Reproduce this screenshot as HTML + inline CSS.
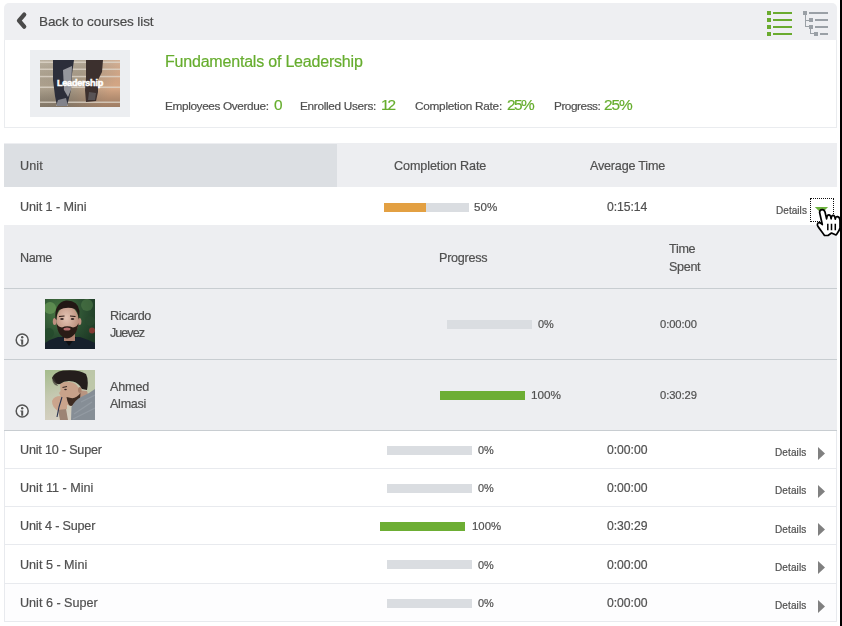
<!DOCTYPE html>
<html><head><meta charset="utf-8">
<style>
html,body{margin:0;padding:0;background:#fff;width:842px;height:626px;overflow:hidden;position:relative;font-family:"Liberation Sans",sans-serif;}
.a{position:absolute;}
.t{position:absolute;white-space:nowrap;line-height:1;will-change:transform;-webkit-text-stroke:0.2px currentColor;font-family:"Liberation Sans",sans-serif;}
.bar{position:absolute;height:9px;background:#dadde1;}
.fill{position:absolute;left:0;top:0;height:9px;}
.div{position:absolute;left:4px;width:833px;height:1px;background:#e8eaee;}
</style></head><body>
<!-- right black strip -->
<div class="a" style="left:840px;top:0;width:2px;height:626px;background:#000"></div>

<!-- header bar -->
<div class="a" style="left:4px;top:3px;width:833px;height:37px;background:#eeeff2;border-radius:5px 5px 0 0"></div>
<svg class="a" style="left:0;top:0" width="40" height="40"><path d="M24.2 14.6 L19.0 20.6 L24.2 26.6" fill="none" stroke="#4a4a4a" stroke-width="4.3" stroke-linecap="round" stroke-linejoin="round"/></svg>
<!-- list icons -->
<svg class="a" style="left:760px;top:5px" width="80" height="35">
 <g fill="#6aab2f">
  <rect x="7" y="6" width="4" height="4"/><rect x="13" y="7" width="19" height="2"/>
  <rect x="7" y="13" width="4" height="4"/><rect x="13" y="14" width="19" height="2"/>
  <rect x="7" y="20" width="4" height="4"/><rect x="13" y="21" width="19" height="2"/>
  <rect x="7" y="27" width="4" height="4"/><rect x="13" y="28" width="19" height="2"/>
 </g>
 <g fill="#9aa0a6">
  <rect x="43" y="6" width="4" height="4"/><rect x="49" y="7" width="19" height="2"/>
  <rect x="45" y="10" width="1" height="12"/><rect x="45" y="15" width="4" height="1"/><rect x="45" y="21" width="4" height="1"/>
  <rect x="49" y="13" width="4" height="4"/><rect x="55" y="14" width="13" height="2"/>
  <rect x="49" y="20" width="4" height="4"/><rect x="55" y="21" width="13" height="2"/>
  <rect x="50" y="24" width="1" height="5"/><rect x="50" y="28" width="4" height="1"/>
  <rect x="54" y="27" width="4" height="4"/><rect x="60" y="28" width="8" height="2"/>
 </g>
</svg>

<!-- course info box -->
<div class="a" style="left:4px;top:40px;width:831px;height:87px;border:1px solid #eaecef;border-top:none"></div>
<div class="a" style="left:30px;top:50px;width:100px;height:67px;background:#eceef1"></div>
<svg class="a" style="left:40px;top:60px" width="80" height="47">
 <defs>
  <linearGradient id="st" x1="0" y1="0" x2="1" y2="0.3"><stop offset="0" stop-color="#b0a592"/><stop offset="0.55" stop-color="#a89a86"/><stop offset="1" stop-color="#d6a886"/></linearGradient>
  <linearGradient id="sv" x1="0" y1="0" x2="0" y2="1"><stop offset="0" stop-color="#fff" stop-opacity="0.15"/><stop offset="0.6" stop-color="#000" stop-opacity="0"/><stop offset="1" stop-color="#3a3028" stop-opacity="0.35"/></linearGradient>
 </defs>
 <rect width="80" height="47" fill="url(#st)"/>
 <rect width="80" height="47" fill="url(#sv)"/>
 <g fill="#e0d8cc" opacity="0.75">
  <rect y="1.5" width="80" height="1.5"/><rect y="8.5" width="80" height="1.5"/><rect y="15.8" width="80" height="1.5"/><rect y="26.5" width="80" height="1.5"/><rect y="41.5" width="80" height="1.5"/>
 </g>
 <path d="M13 0 L34 0 L32 14 L31 30 L29 38 L27 46 L17 46 L15 36 L13 20 Z" fill="#2c2e3a"/>
 <path d="M23 10 L32 6 L31 30 L28 37 L24 30 Z" fill="#a8a8ae" opacity="0.85"/>
 <path d="M18 40 L26 38 L28 46 L16 46 Z" fill="#d8d8dc" opacity="0.5"/>
 <path d="M46 0 L63 0 L62 12 L58 20 L58 32 L56 41 L46 42 L45 30 L46 18 Z" fill="#3c302e"/>
 <path d="M49 32 L56 33 L55 40 L48 40 Z" fill="#6a6a70" opacity="0.6"/>
 <text x="40" y="25.7" font-family="Liberation Sans" font-weight="bold" font-size="9.2" letter-spacing="-0.3" fill="#fff" stroke="#fff" stroke-width="0.5" text-anchor="middle">Leadership</text>
</svg>

<!-- table header -->
<div class="a" style="left:4px;top:144px;width:333px;height:43px;background:#dcdfe3"></div>
<div class="a" style="left:4px;top:143px;width:833px;height:1px;background:#edeef1"></div><div class="a" style="left:337px;top:144px;width:500px;height:43px;background:#edeef1"></div>
<!-- unit 1 row -->
<div class="a" style="left:4px;top:187px;width:833px;height:38px;background:#fff"></div>
<div class="bar" style="left:384px;top:203px;width:85px"><div class="fill" style="width:42px;background:#e3a042"></div></div>
<!-- details dotted box -->
<div class="a" style="left:810px;top:198px;width:22px;height:22px;border:1px dotted #111"></div>
<svg class="a" style="left:812px;top:204px" width="20" height="12"><path d="M2.8 3 L16.1 3 L9.5 9.5 Z" fill="#6db33f"/></svg>

<!-- sub table -->
<div class="a" style="left:4px;top:225px;width:833px;height:206px;background:#edeef1"></div>
<div class="a" style="left:4px;top:288px;width:833px;height:1px;background:#c8cdd1"></div>
<div class="a" style="left:4px;top:359px;width:833px;height:1px;background:#c8cdd1"></div>
<div class="a" style="left:4px;top:430px;width:833px;height:1px;background:#c8cdd1"></div>

<!-- info icons -->
<svg class="a" style="left:14px;top:332px" width="16" height="16"><circle cx="8.2" cy="8" r="6" fill="#f5f6f8" stroke="#555" stroke-width="1.5"/><circle cx="8.2" cy="5.3" r="1.2" fill="#555"/><path d="M6.4 7.6 H9.2 V12.8 H7.2 V8.6 H6.4Z" fill="#555"/></svg>
<svg class="a" style="left:14px;top:403px" width="16" height="16"><circle cx="8.2" cy="8" r="6" fill="#f5f6f8" stroke="#555" stroke-width="1.5"/><circle cx="8.2" cy="5.3" r="1.2" fill="#555"/><path d="M6.4 7.6 H9.2 V12.8 H7.2 V8.6 H6.4Z" fill="#555"/></svg>

<!-- photo 1 -->
<svg class="a" style="left:45px;top:299px" width="50" height="50">
 <defs>
  <radialGradient id="g1" cx="0.3" cy="0.25" r="0.8"><stop offset="0" stop-color="#4a7a44"/><stop offset="0.6" stop-color="#2c5032"/><stop offset="1" stop-color="#1e3a26"/></radialGradient>
  <radialGradient id="f1" cx="0.45" cy="0.4" r="0.6"><stop offset="0" stop-color="#e4c4b4"/><stop offset="1" stop-color="#b88c78"/></radialGradient>
 </defs>
 <rect width="50" height="50" fill="url(#g1)"/>
 <circle cx="5" cy="9" r="6" fill="#6a9a58" opacity="0.7"/>
 <circle cx="42" cy="6" r="6" fill="#4e7a48" opacity="0.6"/>
 <circle cx="45" cy="22" r="5" fill="#2a4a30" opacity="0.8"/>
 <circle cx="47" cy="31.5" r="3" fill="#9a3a36" opacity="0.8"/>
 <circle cx="4" cy="34" r="5" fill="#244a2c" opacity="0.8"/>
 <path d="M0 50 L0 44 Q6 40 13 38 L35 38 Q44 41 50 44 L50 50 Z" fill="#16202c"/><path d="M18 38 L24 47 L31 38 Z" fill="#0c0e12"/>
 <rect x="19" y="33" width="11" height="9" fill="#b08270"/>
 <ellipse cx="9.6" cy="22.5" rx="1.8" ry="3.5" fill="#c09080"/>
 <ellipse cx="34.6" cy="22.5" rx="1.8" ry="3.5" fill="#c09080"/>
 <ellipse cx="22.5" cy="22" rx="11.2" ry="15" fill="url(#f1)"/>
 <path d="M10.5 20 Q9 4 21 1.5 Q33 1 34.5 12 L34 21 Q33 12 30 10 Q22 7 14 11 Q11.5 14 11.5 21 Z" fill="#221814"/>
 <path d="M11.5 24 Q12.5 38 22 39.5 Q32 38 33.5 24 Q32 28 28 28.5 Q22 26 17 28.5 Q13 28 11.5 24 Z" fill="#2a1c16"/>
 <ellipse cx="22" cy="30" rx="3.5" ry="1.5" fill="#b87070"/>
 <path d="M14 17.5 L19.5 17 M25 17 L30.5 17.5" stroke="#2a1a14" stroke-width="1.2"/><ellipse cx="17" cy="20" rx="1.8" ry="1" fill="#3a2a28"/><ellipse cx="27.5" cy="20" rx="1.8" ry="1" fill="#3a2a28"/>
</svg>
<!-- photo 2 -->
<svg class="a" style="left:45px;top:370px" width="50" height="50">
 <defs><linearGradient id="g2" x1="0" y1="0" x2="0.3" y2="1"><stop offset="0" stop-color="#a4bc8c"/><stop offset="0.5" stop-color="#c4c8b0"/><stop offset="1" stop-color="#d6d0c2"/></linearGradient></defs>
 <rect width="50" height="50" fill="url(#g2)"/>
 <path d="M38 0 L50 0 L50 21 L42 23 Z" fill="#bcc6a8" opacity="0.9"/>
 <path d="M32 20 L42 21 L44 28 L35 34 Z" fill="#b89480"/>
 <path d="M15 14 Q19 11 25 12 Q32 13 34 19 L35 30 Q32 36 26 36 Q20 35 17.5 29 L15 25 L14 23 L15.5 21 Z" fill="#c8a28a"/>
 <ellipse cx="34.8" cy="20" rx="1.8" ry="3" fill="#a8826c"/>
 <path d="M17.5 17.5 L22 16.5" stroke="#3a2a24" stroke-width="1.1"/>
 <ellipse cx="20.5" cy="19.5" rx="1.3" ry="0.8" fill="#3a2a28"/>
 <path d="M7 8 Q9 2 18 0.5 Q34 -1 41 4 Q44 10 42 20 L37 19 Q34 13 28 11.5 Q20 10 15 14 Q10 15 7 8 Z" fill="#241e1c"/>
 <path d="M8 6 Q6 11 10 15 L13 16 Z" fill="#3a3430" opacity="0.7"/>
 <path d="M21.5 27 Q23 36 26 36 Q32 35 35 30 L35.5 23 Q31 29 26 28 Z" fill="#3e2c22"/>
 <path d="M26 50 L26.5 37 Q30 30 36 27 L44 23 L50 19 L50 50 Z" fill="#868e96"/>
 <path d="M29 44 L47 32 M28 49 L50 38 M36 32 L50 25" stroke="#a0a8b0" stroke-width="1.2" opacity="0.5"/>
 <path d="M7 31 Q9 25.5 17 26 L22 30 L22 39 L13 41 Q7 37 7 31 Z" fill="#caa48c"/>
 <path d="M13 40 L21 39 L23 50 L15 50 Z" fill="#9c8474"/>
 <path d="M17 27 L14 37 L12 47" stroke="#2a3450" stroke-width="1.1" fill="none"/>
</svg>

<!-- person bars -->
<div class="bar" style="left:447px;top:320px;width:85px"></div>
<div class="bar" style="left:440px;top:391px;width:85px"><div class="fill" style="width:85px;background:#6dae34"></div></div>

<!-- unit rows -->
<div class="a" style="left:4px;top:431px;width:831px;height:190px;border:1px solid #e8eaee;border-top:none"></div>
<div class="div" style="top:468px"></div>
<div class="div" style="top:506px"></div>
<div class="div" style="top:544px"></div>
<div class="div" style="top:583px"></div>
<div class="a" style="left:5px;top:584px;width:831px;height:37px;background:#fdfdfe"></div>

<div class="bar" style="left:387px;top:446px;width:85px"></div>
<div class="bar" style="left:387px;top:484px;width:85px"></div>
<div class="bar" style="left:380px;top:522px;width:85px"><div class="fill" style="width:85px;background:#6dae34"></div></div>
<div class="bar" style="left:387px;top:560px;width:85px"></div>
<div class="bar" style="left:387px;top:599px;width:85px"></div>

<svg class="a" style="left:816px;top:440px" width="12" height="180">
 <g fill="#808080">
  <path d="M2 7 L9 13.5 L2 20 Z"/>
  <path d="M2 45 L9 51.5 L2 58 Z"/>
  <path d="M2 83 L9 89.5 L2 96 Z"/>
  <path d="M2 121 L9 127.5 L2 134 Z"/>
  <path d="M2 160 L9 166.5 L2 173 Z"/>
 </g>
</svg>

<span class="t" style="left:38.70px;top:15.17px;font-size:13.5px;color:#4a4a4a;letter-spacing:-0.089px">Back to courses list</span>
<span class="t" style="left:164.90px;top:53.96px;font-size:16.0px;color:#66ad2e;letter-spacing:-0.200px">Fundamentals of Leadership</span>
<span class="t" style="left:165.40px;top:100.71px;font-size:11.8px;color:#505050;letter-spacing:-0.364px">Employees Overdue:</span>
<span class="t" style="left:273.50px;top:97.26px;font-size:15.4px;color:#66ad2e;letter-spacing:0.000px">0</span>
<span class="t" style="left:300.00px;top:100.71px;font-size:11.8px;color:#505050;letter-spacing:-0.312px">Enrolled Users:</span>
<span class="t" style="left:380.90px;top:97.26px;font-size:15.4px;color:#66ad2e;letter-spacing:-2.025px">12</span>
<span class="t" style="left:415.40px;top:100.71px;font-size:11.8px;color:#505050;letter-spacing:-0.264px">Completion Rate:</span>
<span class="t" style="left:506.50px;top:97.26px;font-size:15.4px;color:#66ad2e;letter-spacing:-1.508px">25%</span>
<span class="t" style="left:553.70px;top:100.71px;font-size:11.8px;color:#505050;letter-spacing:-0.462px">Progress:</span>
<span class="t" style="left:604.30px;top:97.26px;font-size:15.4px;color:#66ad2e;letter-spacing:-1.108px">25%</span>
<span class="t" style="left:20.20px;top:160.03px;font-size:12.6px;color:#505050;letter-spacing:0.132px">Unit</span>
<span class="t" style="left:394.30px;top:160.03px;font-size:12.6px;color:#505050;letter-spacing:-0.103px">Completion Rate</span>
<span class="t" style="left:589.80px;top:160.03px;font-size:12.6px;color:#505050;letter-spacing:-0.209px">Average Time</span>
<span class="t" style="left:20.20px;top:201.03px;font-size:12.6px;color:#505050;letter-spacing:-0.060px">Unit 1 - Mini</span>
<span class="t" style="left:474.30px;top:201.69px;font-size:11.59420289855072px;color:#505050;letter-spacing:0.000px">50%</span>
<span class="t" style="left:607.30px;top:201.37px;font-size:12.2px;color:#505050;letter-spacing:-0.067px">0:15:14</span>
<span class="t" style="left:775.50px;top:206.13px;font-size:10px;color:#505050;letter-spacing:0.055px">Details</span>
<span class="t" style="left:20.20px;top:252.03px;font-size:12.6px;color:#505050;letter-spacing:-0.406px">Name</span>
<span class="t" style="left:438.80px;top:251.93px;font-size:12.6px;color:#505050;letter-spacing:-0.261px">Progress</span>
<span class="t" style="left:668.90px;top:242.93px;font-size:12.6px;color:#505050;letter-spacing:-0.310px">Time</span>
<span class="t" style="left:668.90px;top:261.23px;font-size:12.6px;color:#505050;letter-spacing:-0.331px">Spent</span>
<span class="t" style="left:109.50px;top:310.13px;font-size:12.6px;color:#505050;letter-spacing:-0.337px">Ricardo</span>
<span class="t" style="left:109.50px;top:326.83px;font-size:12.6px;color:#505050;letter-spacing:-0.983px">Juevez</span>
<span class="t" style="left:538.00px;top:319.24px;font-size:10.93425605536329px;color:#505050;letter-spacing:0.000px">0%</span>
<span class="t" style="left:659.60px;top:319.22px;font-size:11.2px;color:#505050;letter-spacing:-0.077px">0:00:00</span>
<span class="t" style="left:109.50px;top:381.13px;font-size:12.6px;color:#505050;letter-spacing:-0.154px">Ahmed</span>
<span class="t" style="left:109.50px;top:397.83px;font-size:12.6px;color:#505050;letter-spacing:-0.283px">Almasi</span>
<span class="t" style="left:531.10px;top:389.47px;font-size:11.727912431587178px;color:#505050;letter-spacing:0.000px">100%</span>
<span class="t" style="left:659.60px;top:389.92px;font-size:11.2px;color:#505050;letter-spacing:-0.077px">0:30:29</span>
<span class="t" style="left:20.10px;top:443.83px;font-size:12.6px;color:#505050;letter-spacing:-0.196px">Unit 10 - Super</span>
<span class="t" style="left:478.10px;top:444.84px;font-size:10.93425605536329px;color:#505050;letter-spacing:0.000px">0%</span>
<span class="t" style="left:607.10px;top:443.67px;font-size:12.2px;color:#505050;letter-spacing:-0.033px">0:00:00</span>
<span class="t" style="left:775.20px;top:447.94px;font-size:10px;color:#505050;letter-spacing:0.122px">Details</span>
<span class="t" style="left:20.10px;top:482.13px;font-size:12.6px;color:#505050;letter-spacing:0.001px">Unit 11 - Mini</span>
<span class="t" style="left:478.10px;top:483.14px;font-size:10.93425605536329px;color:#505050;letter-spacing:0.000px">0%</span>
<span class="t" style="left:607.10px;top:481.97px;font-size:12.2px;color:#505050;letter-spacing:-0.033px">0:00:00</span>
<span class="t" style="left:775.20px;top:486.24px;font-size:10px;color:#505050;letter-spacing:0.122px">Details</span>
<span class="t" style="left:20.10px;top:520.43px;font-size:12.6px;color:#505050;letter-spacing:-0.179px">Unit 4 - Super</span>
<span class="t" style="left:471.80px;top:521.47px;font-size:11.376075058639548px;color:#505050;letter-spacing:0.000px">100%</span>
<span class="t" style="left:607.10px;top:520.27px;font-size:12.2px;color:#505050;letter-spacing:-0.033px">0:30:29</span>
<span class="t" style="left:775.20px;top:524.53px;font-size:10px;color:#505050;letter-spacing:0.122px">Details</span>
<span class="t" style="left:20.10px;top:558.73px;font-size:12.6px;color:#505050;letter-spacing:0.000px">Unit 5 - Mini</span>
<span class="t" style="left:478.10px;top:559.74px;font-size:10.93425605536329px;color:#505050;letter-spacing:0.000px">0%</span>
<span class="t" style="left:607.10px;top:558.57px;font-size:12.2px;color:#505050;letter-spacing:-0.033px">0:00:00</span>
<span class="t" style="left:775.20px;top:562.84px;font-size:10px;color:#505050;letter-spacing:0.122px">Details</span>
<span class="t" style="left:20.10px;top:597.03px;font-size:12.6px;color:#505050;letter-spacing:0.000px">Unit 6 - Super</span>
<span class="t" style="left:478.10px;top:598.04px;font-size:10.93425605536329px;color:#505050;letter-spacing:0.000px">0%</span>
<span class="t" style="left:607.10px;top:596.87px;font-size:12.2px;color:#505050;letter-spacing:-0.033px">0:00:00</span>
<span class="t" style="left:775.20px;top:601.13px;font-size:10px;color:#505050;letter-spacing:0.122px">Details</span>

<!-- hand cursor -->
<svg class="a" style="left:812px;top:204px" width="30" height="36">
 <path d="M7.6 8.5 C7.6 6.2 9.3 5.6 10.2 5.6 C11.6 5.6 12.6 6.6 13 8 L14.6 14.8 C14.8 11.8 15.8 10.8 16.9 10.8 C18.2 10.8 18.9 12 19.1 14.8 C19.4 12 20.3 11.2 21.2 11.3 C22.3 11.4 23 12.5 23.3 15.2 C23.6 13 24.5 12.4 25.5 12.6 C27 13 28 14.5 28 16.5 L28 24 C27.5 26.5 26 28.5 24.5 30.5 L24 31 L19.5 29 L16 31.5 L12.5 31.5 C10.5 28.5 8 25.5 6 22.5 C5 21 5.2 18.8 6.8 18.6 C8 18.5 9.5 19.5 10.3 20.5 Z" fill="#fff" stroke="#000" stroke-width="1.7" stroke-linejoin="round"/>
 <path d="M15.8 19.8 V26.2 M19.5 19.8 V26.2 M23.3 19.8 V26.2" stroke="#000" stroke-width="1.5"/>
</svg>
</body></html>
